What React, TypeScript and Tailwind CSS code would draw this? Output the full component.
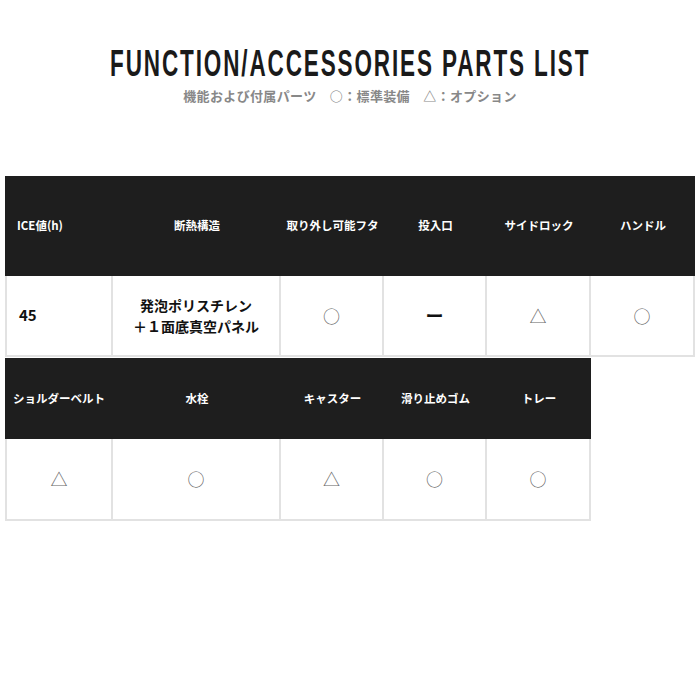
const jp = { fontFamily: '"Noto Sans CJK JP", "Noto Sans", sans-serif' };

type Cell = { text: React.ReactNode; left?: boolean };

const cols1 = 'grid-cols-[108px_168px_103px_103px_104px_104px]';
const cols2 = 'grid-cols-[108px_168px_103px_103px_104px]';

function Sym({ s }: { s: string }) {
  if (s === '-') return <span className="text-[18px] font-bold text-[#111]">ー</span>;
  return <span className="text-[17px] text-[#666]">{s}</span>;
}

function Head({ cells, cols, h }: { cells: Cell[]; cols: string; h: string }) {
  return (
    <div className={`grid ${cols} ${h} bg-[#1e1e1e]`}>
      {cells.map((c, i) => (
        <div
          key={i}
          className={`flex items-center text-[11.5px] font-bold text-white ${c.left ? 'justify-start pl-3' : 'justify-center'}`}
        >
          {c.text}
        </div>
      ))}
    </div>
  );
}

function Body({ cells, cols, h }: { cells: Cell[]; cols: string; h: string }) {
  return (
    <div className={`grid ${cols} ${h}`}>
      {cells.map((c, i) => (
        <div
          key={i}
          className={`flex items-center border-b-2 border-r-2 border-[#e2e2e2] ${i === 0 ? 'border-l-2' : ''} ${c.left ? 'justify-start pl-3' : 'justify-center'}`}
        >
          {c.text}
        </div>
      ))}
    </div>
  );
}

export default function App() {
  const head1: Cell[] = [
    { text: 'ICE値(h)', left: true },
    { text: '断熱構造' },
    { text: '取り外し可能フタ' },
    { text: '投入口' },
    { text: 'サイドロック' },
    { text: 'ハンドル' },
  ];
  const body1: Cell[] = [
    { text: <span className="text-[15px] font-bold text-[#111]">45</span>, left: true },
    {
      text: (
        <span className="text-center text-[14px] font-bold leading-[21px] text-[#111]">
          発泡ポリスチレン
          <br />＋１面底真空パネル
        </span>
      ),
    },
    { text: <Sym s="○" /> },
    { text: <Sym s="-" /> },
    { text: <Sym s="△" /> },
    { text: <Sym s="○" /> },
  ];
  const head2: Cell[] = [
    { text: 'ショルダーベルト' },
    { text: '水栓' },
    { text: 'キャスター' },
    { text: '滑り止めゴム' },
    { text: 'トレー' },
  ];
  const body2: Cell[] = [
    { text: <Sym s="△" /> },
    { text: <Sym s="○" /> },
    { text: <Sym s="△" /> },
    { text: <Sym s="○" /> },
    { text: <Sym s="○" /> },
  ];

  return (
    <div className="h-[700px] w-[700px] bg-white" style={jp}>
      <div className="pt-[44px] text-center">
        <div className="flex h-[40px] justify-center">
          <h1
            className="inline-block origin-center scale-x-[0.625] whitespace-nowrap text-[36px] font-bold leading-[40px] tracking-[3px] text-[#1a1a1a]"
            style={{ fontFamily: '"Liberation Sans", Arial, sans-serif' }}
          >
            FUNCTION/ACCESSORIES PARTS LIST
          </h1>
        </div>
        <p className="mt-[2px] text-[13px] font-bold leading-[20px] tracking-[0.35px] text-[#888]">
          機能および付属パーツ　○：標準装備　△：オプション
        </p>
      </div>

      <div className="ml-[5px] mt-[70px] w-[690px]">
        <Head cells={head1} cols={cols1} h="h-[100px]" />
        <Body cells={body1} cols={cols1} h="h-[81px]" />
      </div>
      <div className="ml-[5px] mt-[1px] w-[586px]">
        <Head cells={head2} cols={cols2} h="h-[81px]" />
        <Body cells={body2} cols={cols2} h="h-[82px]" />
      </div>
    </div>
  );
}
